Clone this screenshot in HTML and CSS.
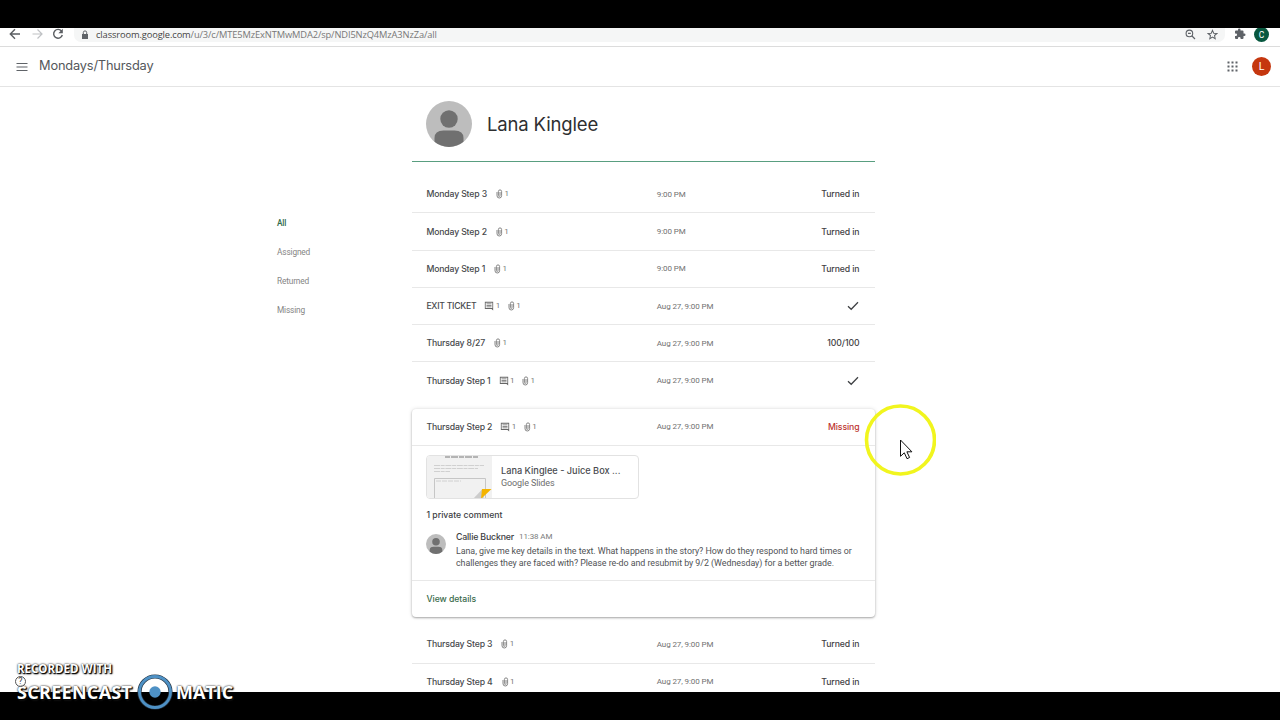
FILE: index.html
```html
<!DOCTYPE html>
<html lang="en">
<head>
<meta charset="utf-8">
<title>Mondays/Thursday</title>
<link rel="stylesheet" href="styles.css">
</head>
<body>
<svg class="defs" aria-hidden="true">
  <symbol id="clip" viewBox="0 0 7 10"><path d="M1 3v3.700a2.200 2.200 0 0 0 4.600 0V2.500a1.600 1.600 0 0 0-3.200 0v4.100a.8.8 0 0 0 1.600 0V3" fill="none" stroke="currentColor" stroke-width=".95"/></symbol>
  <symbol id="note" viewBox="0 0 24 24"><path fill="currentColor" d="M22 2H2v17h16l4 4zM4 4h16v13H4zM6 6h12v2H6zm0 3.500h12v2H6zM6 13h12v2H6z"/></symbol>
  <symbol id="check" viewBox="0 0 12 10"><path d="M1 5.200 4.200 8.300 11 1.200" fill="none" stroke="currentColor" stroke-width="1.250"/></symbol>
  <symbol id="person" viewBox="0 0 46 46"><circle cx="23" cy="23" r="23" fill="#bdbdbd"/><circle cx="23" cy="18" r="8.700" fill="#707070"/><path d="M8.500 40.800V37q0-7.500 9-7.500h11q9 0 9 7.500v3.800A23 23 0 0 1 8.500 40.800z" fill="#707070"/></symbol>
</svg>
<div class="screen">
  <div class="browser">
    <div class="nav">
      <svg width="12" height="12" viewBox="0 0 12 12"><path d="M11 6H1.500M6 1.300 1.300 6 6 10.700" fill="none" stroke="#5a5d61" stroke-width="1.400"/></svg>
      <svg width="12" height="12" viewBox="0 0 12 12"><path d="M1.500 6H11M6.500 1.500 11 6 6.500 10.500" fill="none" stroke="#bfc1c4" stroke-width="1.200"/></svg>
      <svg width="12" height="12" viewBox="0 0 12 12"><path d="M9.600 3.200A4.400 4.400 0 1 0 10.300 7" fill="none" stroke="#5a5d61" stroke-width="1.400"/><path d="M10.800 .8v4.400H6.400z" fill="#5a5d61"/></svg>
    </div>
    <div class="address">
      <svg width="8" height="10" viewBox="0 0 8 10"><path d="M1 4h6v5H1z" fill="#5f6368"/><path d="M2.300 4V2.600a1.700 1.700 0 0 1 3.400 0V4" fill="none" stroke="#5f6368"/></svg>
      <span class="url"><span class="host">classroom.google.com</span>/u/3/c/MTE5MzExNTMwMDA2/sp/NDI5NzQ4MzA3NzZa/all</span>
      <svg class="lens" width="11" height="11" viewBox="0 0 11 11"><circle cx="4.400" cy="4.400" r="3.300" fill="none" stroke="#5f6368" stroke-width="1.100"/><path d="M7 7l3 3M3 4.400h2.800" stroke="#5f6368" stroke-width="1.200"/></svg>
      <svg width="11" height="11" viewBox="0 0 24 24"><path d="m12 3 2.700 6.200 6.800.6-5.100 4.500 1.500 6.700-5.900-3.600L6.100 21l1.500-6.700L2.500 9.800l6.800-.6z" fill="none" stroke="#5f6368" stroke-width="2.200"/></svg>
    </div>
    <svg class="puzzle" width="12" height="12" viewBox="0 0 24 24"><path fill="#5f6368" d="M20.500 11H19V7a2 2 0 0 0-2-2h-4V3.500a2.500 2.500 0 0 0-5 0V5H4a2 2 0 0 0-2 2v3.800h1.500a2.700 2.700 0 0 1 0 5.400H2V20a2 2 0 0 0 2 2h3.800v-1.500a2.700 2.700 0 0 1 5.400 0V22H17a2 2 0 0 0 2-2v-4h1.500a2.500 2.500 0 0 0 0-5z"/></svg>
    <span class="badge profile">C</span>
  </div>
  <header class="appbar">
    <svg class="menu" width="12" height="10" viewBox="0 0 12 10"><path d="M.5 1.500h11M.5 5h11M.5 8.500h11" stroke="#5f6368" stroke-width="1.100"/></svg>
    <span class="course">Mondays/Thursday</span>
    <svg class="apps" width="11" height="11" viewBox="0 0 11 11" fill="#5f6368"><path d="M.5.5h2v2h-2zM4.500.5h2v2h-2zM8.500.5h2v2h-2zM.5 4.500h2v2h-2zM4.500 4.500h2v2h-2zM8.500 4.500h2v2h-2zM.5 8.500h2v2h-2zM4.500 8.500h2v2h-2zM8.500 8.500h2v2h-2z"/></svg>
    <span class="badge account">L</span>
  </header>
  <main class="page">
    <nav class="filters"><span class="on">All</span><span>Assigned</span><span>Returned</span><span>Missing</span></nav>
    <section class="work">
      <div class="student"><svg width="46" height="46"><use href="#person"/></svg><h1>Lana Kinglee</h1></div>
      <div class="list">
        <div class="row"><div class="title"><b>Monday Step 3</b><svg class="clip"><use href="#clip"/></svg><i>1</i></div><span class="due">9:00 PM</span><span class="state">Turned in</span></div>
        <div class="row"><div class="title"><b>Monday Step 2</b><svg class="clip"><use href="#clip"/></svg><i>1</i></div><span class="due">9:00 PM</span><span class="state">Turned in</span></div>
        <div class="row"><div class="title"><b>Monday Step 1</b><svg class="clip"><use href="#clip"/></svg><i>1</i></div><span class="due">9:00 PM</span><span class="state">Turned in</span></div>
        <div class="row"><div class="title"><b class="caps">EXIT TICKET</b><svg class="note"><use href="#note"/></svg><i>1</i><svg class="clip"><use href="#clip"/></svg><i>1</i></div><span class="due">Aug 27, 9:00 PM</span><span class="state"><svg class="check"><use href="#check"/></svg></span></div>
        <div class="row"><div class="title"><b>Thursday 8/27</b><svg class="clip"><use href="#clip"/></svg><i>1</i></div><span class="due">Aug 27, 9:00 PM</span><span class="state">100/100</span></div>
        <div class="row last"><div class="title"><b>Thursday Step 1</b><svg class="note"><use href="#note"/></svg><i>1</i><svg class="clip"><use href="#clip"/></svg><i>1</i></div><span class="due">Aug 27, 9:00 PM</span><span class="state"><svg class="check"><use href="#check"/></svg></span></div>
      </div>
      <article class="card">
        <div class="row head"><div class="title"><b>Thursday Step 2</b><svg class="note"><use href="#note"/></svg><i>1</i><svg class="clip"><use href="#clip"/></svg><i>1</i></div><span class="due">Aug 27, 9:00 PM</span><span class="state missing">Missing</span></div>
        <div class="detail">
          <div class="file">
            <svg width="65" height="43" viewBox="0 0 65 43"><path fill="#f1f1f1" d="M0 0h65v43H0z"/><path d="M18 1h34" stroke="#a0a0a0" stroke-width="1.500" stroke-dasharray="5 1 7 1"/><path d="M7 9.500h50M7 12.500h44M7 15.500h16" stroke="#d0d0d0" stroke-width="1" stroke-dasharray="6 .7 4 .7"/><path d="M7.500 43V22.500h51V43" fill="none" stroke="#c6c6c6"/><path d="M9 25h25" stroke="#d0d0d0" stroke-dasharray="5 1"/><path d="M46 43 55 33.500l2 9.500z" fill="#ccc"/><path d="M55 33h9.500L54 43z" fill="#f4b400"/></svg>
            <div class="fileinfo"><span class="filename">Lana Kinglee - Juice Box ...</span><span class="kind">Google Slides</span></div>
          </div>
          <div class="count">1 private comment</div>
          <div class="comment">
            <svg width="20" height="20" viewBox="0 0 46 46"><use href="#person" width="46" height="46"/></svg>
            <div class="body"><div class="by"><span class="author">Callie Buckner</span><span class="time">11:38 AM</span></div>
            <p><span>Lana, give me key details in the text. What happens in the story? How do they respond to hard times or</span><br><span>challenges they are faced with? Please re-do and resubmit by 9/2 (Wednesday) for a better grade.</span></p></div>
          </div>
        </div>
        <div class="more">View details</div>
      </article>
      <div class="list">
        <div class="row"><div class="title"><b>Thursday Step 3</b><svg class="clip"><use href="#clip"/></svg><i>1</i></div><span class="due">Aug 27, 9:00 PM</span><span class="state">Turned in</span></div>
        <div class="row"><div class="title"><b>Thursday Step 4</b><svg class="clip"><use href="#clip"/></svg><i>1</i></div><span class="due">Aug 27, 9:00 PM</span><span class="state">Turned in</span></div>
      </div>
    </section>
  </main>
  <svg class="pointer" width="72" height="72" viewBox="0 0 72 72"><circle cx="36.500" cy="36" r="34" fill="none" stroke="#f1f51e" stroke-width="3.600"/><path d="M36.500 36v16.300l3.800-3.500 2.700 5.900 2.600-1.200-2.700-5.700h5z" fill="#fff" stroke="#111"/></svg>
  <div class="watermark">
    <span class="recorded">RECORDED WITH</span>
    <span class="help">?</span>
    <div class="brand"><span class="w1">SCREENCAST</span><svg width="36" height="36" viewBox="0 0 36 36"><circle cx="18" cy="18" r="15.500" fill="none" stroke="#253544" stroke-width="4.200"/><circle cx="18" cy="18" r="15.500" fill="none" stroke="#4e91c5" stroke-width="2.800"/><path d="M7 17.500a11 11 0 0 1 22 0z" fill="#fff"/><circle cx="18" cy="18" r="5.700" fill="#4e91c5"/></svg><span class="w2">MATIC</span></div>
  </div>
</div>
</body>
</html>
```
FILE: styles.css
```css
* { box-sizing: border-box; }
body { margin: 0; background: #000; font-family: Roboto, sans-serif; color: #3c4043; }
svg { display: block; flex: none; }
span, b, i { white-space: nowrap; }
.defs { position: absolute; width: 0; height: 0; }
.screen { position: relative; width: 1280px; height: 720px; padding: 28px 0; display: flex; flex-direction: column; overflow: hidden; background: #000; }

.browser { height: 19px; flex: none; background: #fff; border-bottom: 1px solid #dcdcdc; display: flex; align-items: flex-start; overflow: hidden; }
.nav { width: 74px; padding: 0 0 0 9px; display: flex; gap: 9.500px; }
.address { width: 1151px; height: 14px; background: #f5f6f6; border-radius: 0 0 7px 7px; display: flex; align-items: center; padding: 0 7px 1px 7px; }
.url { margin-left: 7px; font: 9.300px/12px "Open Sans", sans-serif; letter-spacing: -.11px; color: #777; }
.host { color: #444; }
.lens { margin-left: auto; margin-right: 11px; }
.puzzle { margin-left: 9px; }
.badge { display: flex; align-items: center; justify-content: center; border-radius: 50%; color: #fff; flex: none; }
.profile { width: 15px; height: 15px; margin: -1px 0 0 8px; background: #08583f; font-size: 8.500px; }

.appbar { height: 40px; flex: none; background: #fff; border-bottom: 1px solid #e4e4e4; display: flex; align-items: center; padding: 0 9px 0 16px; }
.course { margin: -2px 0 0 11px; font: 12.800px/18px Inter, sans-serif; letter-spacing: -.17px; color: #54575b; }
.apps { margin-left: auto; margin-right: 14px; }
.account { width: 19px; height: 19px; background: #c5370f; font-size: 10.500px; }

.page { flex: 1; min-height: 0; background: #fff; display: flex; overflow: hidden; }
.filters { width: 412px; padding: 130px 0 0 277px; display: flex; flex-direction: column; gap: 17.100px; font-size: 8.300px; letter-spacing: -.15px; line-height: 12px; color: #858585; }
.filters .on { color: #2f6b4b; font-weight: 500; }
.work { width: 463px; flex: none; }
.student { height: 75px; border-bottom: 1px solid #599e80; display: flex; align-items: center; gap: 15px; padding: 0 0 0 14px; }
h1 { margin: 0; font: 18.500px/26px Inter, sans-serif; letter-spacing: -.15px; color: #2e2f31; }
.list { margin-top: 14.200px; }
.row { height: 37.250px; border-bottom: 1px solid #e8e8e8; display: grid; grid-template-columns: 230.400px 1fr auto; align-items: center; padding: 0 15.500px 0 14.400px; }
.row.last { border-color: transparent; }
.title { display: flex; align-items: center; }
.title b { font: 500 8.700px/12px Inter, sans-serif; letter-spacing: -.16px; color: #47494c; }
.title .caps { letter-spacing: -.28px; }
.title i { font: 8px/12px Roboto, sans-serif; color: #777; }
.clip { width: 7px; height: 10px; margin: 0 1.500px 0 9px; color: #808080; }
.title i + .clip { margin-left: 7.500px; }
.note { width: 10px; height: 10px; margin: 0 1.500px 0 8px; color: #666; }
.due { font-size: 8px; letter-spacing: -.1px; color: #717171; }
.state { font: 500 8.700px/12px Inter, sans-serif; letter-spacing: -.1px; color: #3f4144; }
.state.missing { color: #bd3531; }
.check { width: 12px; height: 10px; margin-right: 1px; }

.card { height: 208px; margin-top: 9px; background: #fff; border-radius: 4px; box-shadow: 0 1px 2px rgba(0,0,0,.3), 0 0 4px rgba(0,0,0,.13); display: flex; flex-direction: column; }
.card .head { height: 37px; flex: none; }
.detail { height: 135px; padding: 9px 14px 0; border-bottom: 1px solid #e8e8e8; }
.file { width: 213px; height: 44.500px; border: 1px solid #e2e2e2; border-radius: 4px; display: flex; gap: 9px; overflow: hidden; }
.fileinfo { display: flex; flex-direction: column; padding-top: 8px; }
.filename { font: 500 9.200px/13px Inter, sans-serif; color: #4a4c50; }
.kind { font-size: 9px; line-height: 13px; letter-spacing: -.1px; color: #6d6d6d; }
.count { margin: 9.500px 0 0 .4px; font: 500 8.700px/12px Inter, sans-serif; }
.comment { display: flex; gap: 10px; margin-top: 10px; align-items: flex-start; }
.comment svg { margin-top: 3px; }
.by { display: flex; gap: 5px; line-height: 12px; align-items: center; }
.author { font: 500 8.800px/12px Inter, sans-serif; letter-spacing: -.18px; }
.time { font-size: 8px; letter-spacing: -.1px; color: #7b7b7b; }
p { margin: 2px 0 0; font-size: 8.900px; letter-spacing: -.048px; line-height: 12.200px; color: #505255; }
.more { padding: 12px 14.400px; font: 500 8.700px/12px Inter, sans-serif; letter-spacing: -.05px; color: #3a6b4c; }
.card + .list { margin-top: 9.600px; }

.pointer { position: absolute; left: 864px; top: 403.500px; }
.watermark { position: absolute; left: 17px; top: 661px; color: #fff; text-shadow: 1px 1px 1px #000, 0 0 2px #000, 1px 1px 2px #333; font-family: "Open Sans", sans-serif; font-weight: 700; }
.recorded { display: block; font-size: 11.500px; line-height: 16px; }
.help { position: absolute; left: -2px; top: 15px; width: 11px; height: 11px; border: 1px solid #555; border-radius: 50%; font: 9px/9px Roboto, sans-serif; text-align: center; color: #444; text-shadow: none; }
.brand { display: flex; align-items: center; height: 36px; margin-top: -3px; font-size: 18px; line-height: 20px; }
.w1 { width: 116px; letter-spacing: .3px; }
.brand svg { margin: 0 3px 0 4px; }
```
